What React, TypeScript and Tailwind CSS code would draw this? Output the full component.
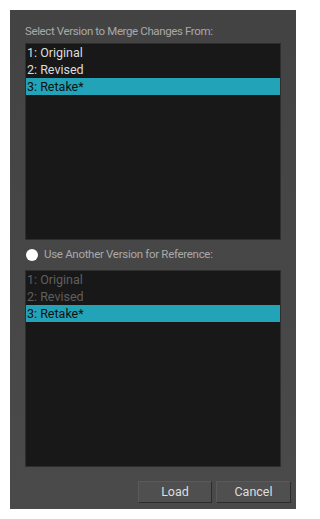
import React, { useState } from "react";

type Version = { id: number; name: string };

const versions: Version[] = [
  { id: 1, name: "Original" },
  { id: 2, name: "Revised" },
  { id: 3, name: "Retake*" },
];

const VersionList: React.FC<{ selected: number; disabled?: boolean; onSelect: (id: number) => void }> = ({
  selected,
  disabled,
  onSelect,
}) => (
  <div className="h-[197px] bg-[#181818] border border-[#2e2e2e] flex flex-col">
    {versions.map((v) => (
      <div
        key={v.id}
        onClick={() => onSelect(v.id)}
        className={`h-[17px] leading-[17px] pl-[1px] text-[12.5px] cursor-default ${
          selected === v.id
            ? "bg-[#22a3b8] text-[#101010]"
            : disabled
            ? "text-[#5f5f5f]"
            : "text-[#dcdcdc]"
        }`}
      >
        {v.id}: {v.name}
      </div>
    ))}
  </div>
);

export default function App() {
  const [mergeFrom, setMergeFrom] = useState(3);
  const [reference, setReference] = useState(3);
  const [useOther, setUseOther] = useState(false);

  return (
    <div className="w-[306px] h-[519px] bg-white p-[10px]" style={{ fontFamily: 'Roboto, "Liberation Sans", sans-serif' }}>
      <div className="w-[286px] h-[499px] bg-gradient-to-b from-[#434343] to-[#4a4a4a] flex flex-col">
        <div className="px-[15px] pt-[13px]">
          <div className="h-[20px] text-[11.5px] tracking-[-0.38px] leading-[16px] text-[#a9a9a9]">
            Select Version to Merge Changes From:
          </div>
          <VersionList selected={mergeFrom} onSelect={setMergeFrom} />

          {/* reference toggle */}
          <div className="h-[30px] flex items-center gap-[6px]">
            <button
              onClick={() => setUseOther(!useOther)}
              className="w-[12px] h-[12px] rounded-full bg-white flex items-center justify-center ml-[1px]"
            >
              {useOther && <span className="w-[6px] h-[6px] rounded-full bg-[#222]" />}
            </button>
            <span className="text-[11.5px] tracking-[-0.3px] text-[#a9a9a9]">Use Another Version for Reference:</span>
          </div>
          <VersionList selected={reference} disabled={!useOther} onSelect={setReference} />
        </div>

        {/* buttons */}
        <div className="flex justify-end gap-[4px] pr-[5px] mt-[14px]">
          <button className="w-[74px] h-[22px] bg-[#4f4f4f] border border-[#2c2c2c] border-t-[#5a5a5a] border-l-[#5a5a5a] text-[12.5px] text-[#dedede]">
            Load
          </button>
          <button className="w-[75px] h-[22px] bg-[#4f4f4f] border border-[#2c2c2c] border-t-[#5a5a5a] border-l-[#5a5a5a] text-[12.5px] text-[#dedede]">
            Cancel
          </button>
        </div>
      </div>
    </div>
  );
}
